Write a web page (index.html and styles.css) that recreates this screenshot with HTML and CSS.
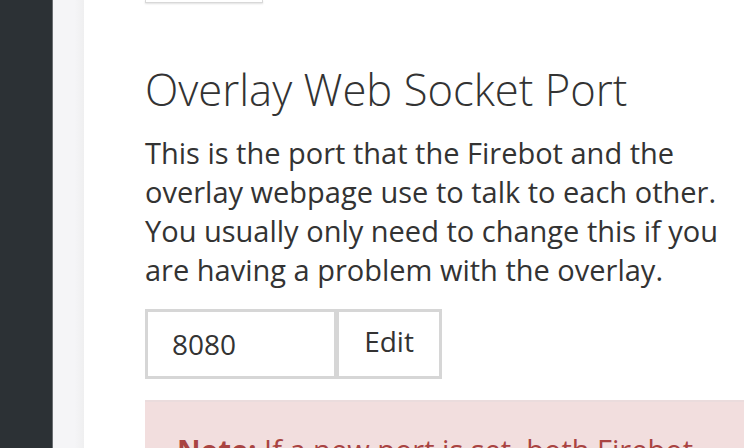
FILE: index.html
```html
<!DOCTYPE html>
<html>
<head>
<meta charset="utf-8">
<link rel="stylesheet" href="styles.css">
</head>
<body>
<div class="app">
  <aside class="sidebar"></aside>
  <div class="gutter"></div>
  <main class="content">
    <div class="prev-box"></div>
    <section class="setting">
      <h3 class="title">Overlay Web Socket Port</h3>
      <p class="desc">This is the port that the Firebot and the overlay webpage use to talk to each other. You usually only need to change this if you are having a problem with the overlay.</p>
      <div class="input-group">
        <div class="port-input">8080</div>
        <button class="edit-btn">Edit</button>
      </div>
      <div class="alert"><b>Note:</b> If a new port is set, both Firebot and the overlay need to be restarted.</div>
    </section>
  </main>
</div>
</body>
</html>
```
FILE: styles.css
```css
html, body {
  margin: 0;
  padding: 0;
  height: 100%;
  overflow: hidden;
}
body {
  font-family: "Open Sans", "Liberation Sans", sans-serif;
  color: #333;
  background: #fff;
}
.app {
  display: flex;
  height: 448px;
  overflow: hidden;
}
.sidebar {
  width: 52px;
  flex: none;
  background: #2c3135;
  border-right: 1px solid #6a6e72;
}
.gutter {
  width: 31px;
  flex: none;
  background: linear-gradient(to right, #f5f5f7 0%, #f5f5f7 70%, #efeff0 100%);
}
.content {
  flex: 1;
  padding-left: 61px;
  min-width: 0;
  overflow: hidden;
}
.prev-box {
  box-sizing: border-box;
  width: 118px;
  height: 3px;
  border: 1px solid #d8d8d8;
  border-top: none;
  background: #fff;
  box-shadow: 0 1px 2px rgba(0,0,0,0.12);
}
.setting {
  padding-top: 61px;
}
.title {
  margin: 0;
  font-weight: 300;
  font-size: 43.6px;
  line-height: 50px;
  color: #333;
}
.desc {
  margin: 19px 0 0;
  font-size: 29px;
  line-height: 39px;
  width: 590px;
  color: #333;
}
.input-group {
  display: flex;
  margin-top: 20px;
  width: 297px;
  height: 70px;
}
.port-input {
  box-sizing: border-box;
  width: 192px;
  flex: none;
  border: 3px solid #d6d6d6;
  padding-left: 24px;
  display: flex;
  align-items: center;
  font-size: 28px;
  color: #333;
}
.edit-btn {
  box-sizing: border-box;
  flex: 1;
  border: 3px solid #d6d6d6;
  border-left-width: 2px;
  background: #fff;
  font-family: inherit;
  font-size: 28px;
  color: #333;
  padding: 0 0 6px;
}
.alert {
  box-sizing: border-box;
  margin-top: 21px;
  background: #f2dede;
  border-top: 2px solid #ebdcdd;
  padding: 28px 32px;
  font-size: 29px;
  line-height: 39px;
  color: #a94442;
  width: 599px;
}
.alert b {
  font-weight: 700;
}
```
